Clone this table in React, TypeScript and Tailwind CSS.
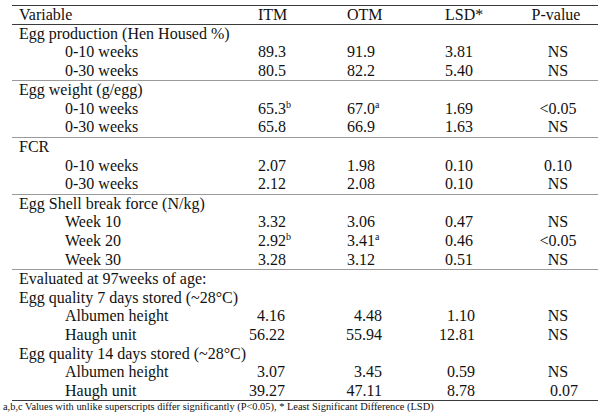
type Cell = string | { v: string; sup: string };
type Row = { label: string; indent?: boolean; right?: boolean; vals?: Cell[] };

const sections: Row[][] = [
  [
    { label: 'Egg production (Hen Housed %)' },
    { label: '0-10 weeks', indent: true, vals: ['89.3', '91.9', '3.81', 'NS'] },
    { label: '0-30 weeks', indent: true, vals: ['80.5', '82.2', '5.40', 'NS'] },
  ],
  [
    { label: 'Egg weight (g/egg)' },
    { label: '0-10 weeks', indent: true, vals: [{ v: '65.3', sup: 'b' }, { v: '67.0', sup: 'a' }, '1.69', '<0.05'] },
    { label: '0-30 weeks', indent: true, vals: ['65.8', '66.9', '1.63', 'NS'] },
  ],
  [
    { label: 'FCR' },
    { label: '0-10 weeks', indent: true, vals: ['2.07', '1.98', '0.10', '0.10'] },
    { label: '0-30 weeks', indent: true, vals: ['2.12', '2.08', '0.10', 'NS'] },
  ],
  [
    { label: 'Egg Shell break force (N/kg)' },
    { label: 'Week 10', indent: true, vals: ['3.32', '3.06', '0.47', 'NS'] },
    { label: 'Week 20', indent: true, vals: [{ v: '2.92', sup: 'b' }, { v: '3.41', sup: 'a' }, '0.46', '<0.05'] },
    { label: 'Week 30', indent: true, vals: ['3.28', '3.12', '0.51', 'NS'] },
  ],
  [
    { label: 'Evaluated at 97weeks of age:' },
    { label: 'Egg quality 7 days stored (~28°C)' },
    { label: 'Albumen height', indent: true, right: true, vals: ['4.16', '4.48', '1.10', 'NS'] },
    { label: 'Haugh unit', indent: true, right: true, vals: ['56.22', '55.94', '12.81', 'NS'] },
    { label: 'Egg quality 14 days stored (~28°C)' },
    { label: 'Albumen height', indent: true, right: true, vals: ['3.07', '3.45', '0.59', 'NS'] },
    { label: 'Haugh unit', indent: true, right: true, vals: ['39.27', '47.11', '8.78', '0.07'] },
  ],
];

// left padding for the upper blocks, right padding for the "evaluated" block
const leftPad = ['pl-[18px] text-left', 'pl-[17px] text-left', 'pl-[25px] text-left'];
const rightPad = ['pr-[45px] text-right', 'pr-[38px] text-right', 'pr-[35px] text-right'];

const Value = ({ c }: { c: Cell }) => {
  if (typeof c === 'string') return <>{c}</>;
  return (
    <>
      {c.v}
      <sup className="text-[10px] top-[-0.6em]">{c.sup}</sup>
    </>
  );
};

const TableRow = ({ row }: { row: Row }) => (
  <div className="grid grid-cols-[228px_90px_90px_90px_88px] h-[18.6px] leading-[18.6px]">
    <div className={row.indent ? 'pl-[53px] whitespace-nowrap' : 'pl-[7px] whitespace-nowrap'}>{row.label}</div>
    {row.vals &&
      row.vals.map((c, i) =>
        i < 3 ? (
          <div key={i} className={row.right ? rightPad[i] : leftPad[i]}>
            <Value c={c} />
          </div>
        ) : (
          <div key={i} className={c === '0.07' ? 'text-center pl-[20px]' : 'text-center pl-[8px]'}>
            <Value c={c} />
          </div>
        )
      )}
  </div>
);

const App = () => {
  return (
    <div className="w-[600px] h-[413px] bg-white text-[#111] pt-[5px] overflow-hidden font-['Liberation_Serif','Times_New_Roman',serif]">
      <div className="ml-[12px] w-[586px] text-[16px]">
        <div className="grid grid-cols-[228px_90px_90px_90px_88px] h-[19.5px] leading-[18px] border-t border-b border-[#3a3a3a]">
          <div className="pl-[7px]">Variable</div>
          <div className="pl-[18px]">ITM</div>
          <div className="pl-[17px]">OTM</div>
          <div className="pl-[25px]">LSD*</div>
          <div className="text-center pl-[4px]">P-value</div>
        </div>
        {sections.map((s, si) => (
          <div
            key={si}
            className={si === sections.length - 1 ? 'border-b border-[#3a3a3a]' : 'border-b border-[#9a9a9a]'}
          >
            {s.map((r, ri) => (
              <TableRow key={ri} row={r} />
            ))}
          </div>
        ))}
      </div>
      <div className="pl-[3px] text-[10.4px] leading-[12px] whitespace-nowrap">
        a,b,c Values with unlike superscripts differ significantly (P&lt;0.05), * Least Significant Difference (LSD)
      </div>
    </div>
  );
};

export default App;
